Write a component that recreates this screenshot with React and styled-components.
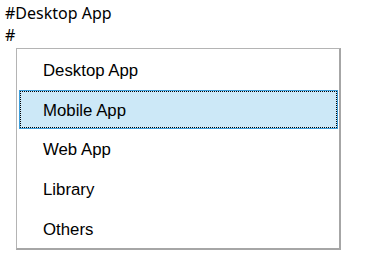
import React from "react";
import styled, { createGlobalStyle } from "styled-components";

const Global = createGlobalStyle`
  html, body { margin: 0; padding: 0; background: #ffffff; }
  body { font-family: "Noto Sans", "Open Sans", sans-serif; color: #000; }
`;

const Page = styled.div`
  padding: 2px 0 0 5px;
  width: 389px;
  height: 266px;
  box-sizing: border-box;
`;

const Line = styled.div`
  font-family: "Noto Sans", sans-serif;
  font-size: 16px;
  line-height: 22px;
  color: #000;
`;

const ListBox = styled.div`
  margin: 2px 0 0 11px;
  width: 325px;
  height: 202px;
  box-sizing: border-box;
  border-top: 1px solid #b4b4b4;
  border-left: 1px solid #b4b4b4;
  border-right: 2px solid #a6a6a6;
  border-bottom: 2px solid #a6a6a6;
  padding: 1px 1px 0 2px;
  display: flex;
  flex-direction: column;
  background: #fff;
`;

const Option = styled.div`
  height: 40px;
  box-sizing: border-box;
  display: flex;
  align-items: center;
  padding: 3px 0 0 23px;
  font-family: "Liberation Sans", Arial, sans-serif;
  font-size: 16.8px;
  color: #000;
  background: ${(p) => (p.$selected ? "#cce8f7" : "transparent")};
  border: 1px solid ${(p) => (p.$selected ? "#3d9fdc" : "transparent")};
  outline: ${(p) => (p.$selected ? "1px dotted #000" : "none")};
  outline-offset: -2px;
`;

const options = ["Desktop App", "Mobile App", "Web App", "Library", "Others"];

export default function App() {
  return (
    <Page>
      <Global />
      <Line>#Desktop App</Line>
      <Line>#</Line>
      <ListBox>
        {options.map((o) => (
          <Option key={o} $selected={o === "Mobile App"}>
            {o}
          </Option>
        ))}
      </ListBox>
    </Page>
  );
}
